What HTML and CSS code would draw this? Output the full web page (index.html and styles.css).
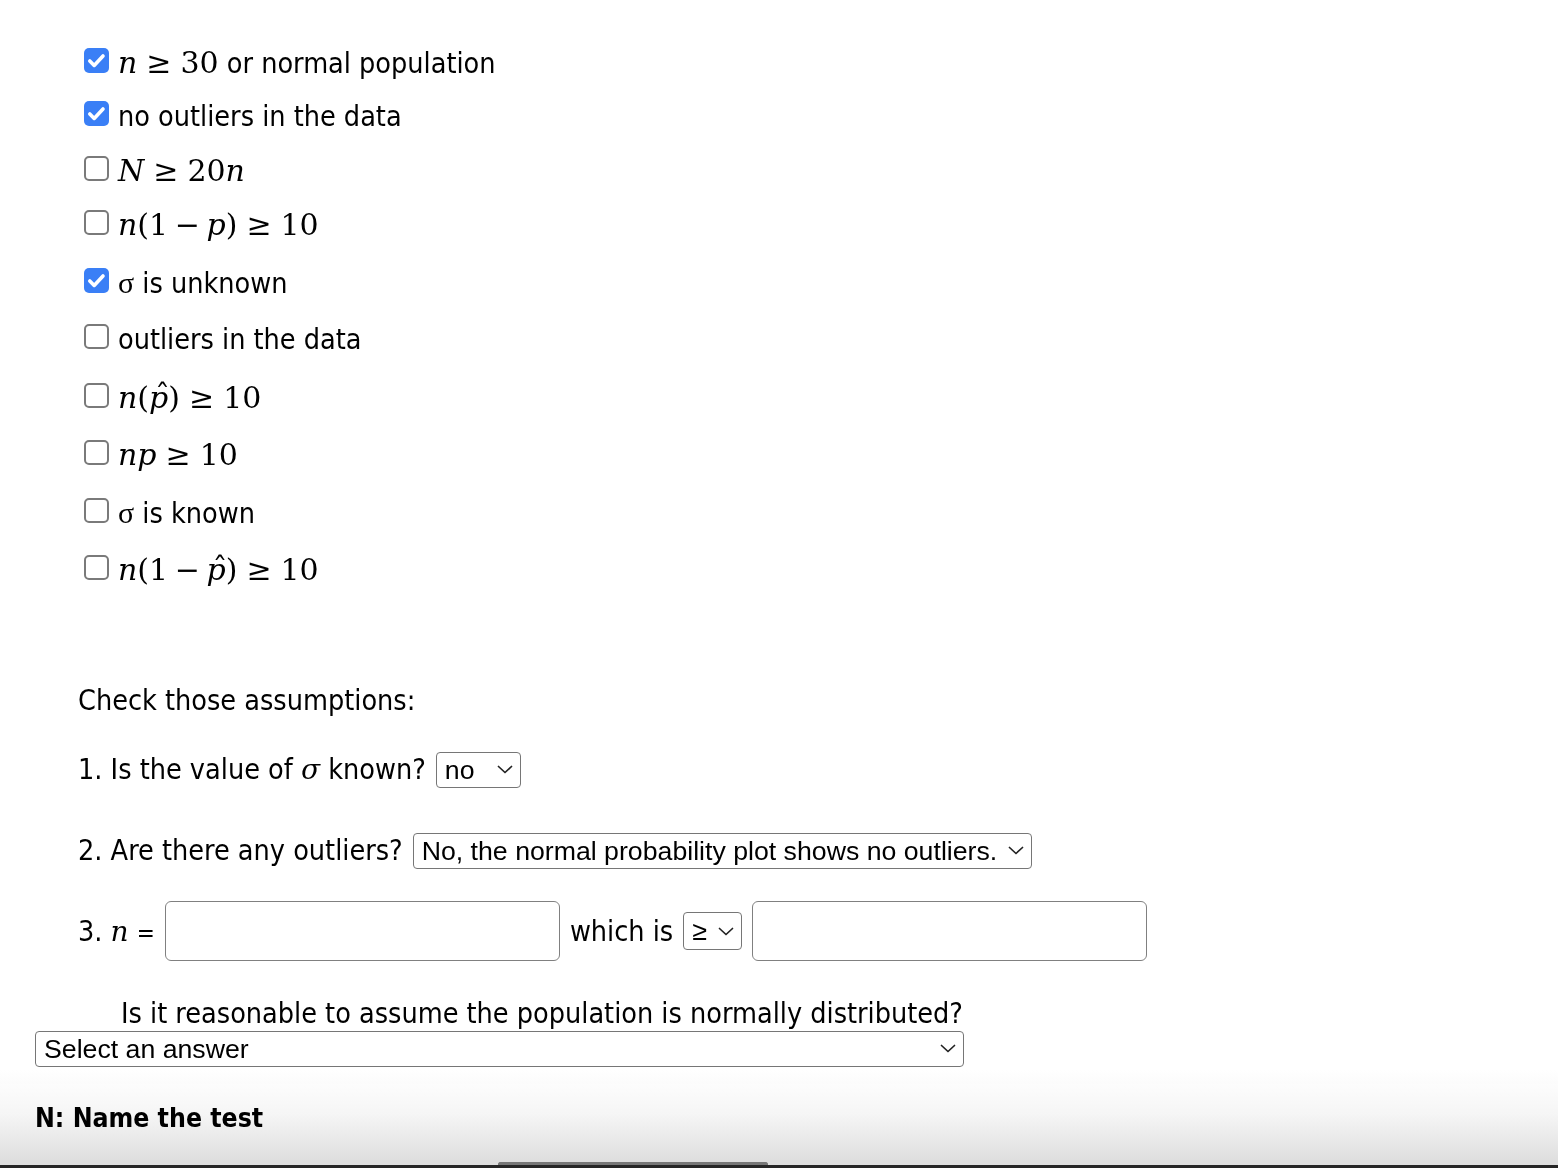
FILE: index.html
```html
<!DOCTYPE html>
<html lang="en">
<head>
<meta charset="utf-8">
<title>Check assumptions</title>
<link rel="stylesheet" href="styles.css">
</head>
<body>
<main class="page">
  <div class="opts">
    <div class="opt short"><span class="cb on"><svg viewBox="0 0 25 25"><path d="M5.8 13l4.4 4.4 8.8-9.4"/></svg></span><span class="lbl"><span class="m"><i>n</i><span class="rel">≥</span>30</span> or normal population</span></div>
    <div class="opt short"><span class="cb on"><svg viewBox="0 0 25 25"><path d="M5.8 13l4.4 4.4 8.8-9.4"/></svg></span><span class="lbl">no outliers in the data</span></div>
    <div class="opt short"><span class="cb"></span><span class="lbl"><span class="m"><i>N</i><span class="rel">≥</span>20<i>n</i></span></span></div>
    <div class="opt"><span class="cb"></span><span class="lbl"><span class="m"><i>n</i>(1<span class="bin">−</span><i>p</i>)<span class="rel">≥</span>10</span></span></div>
    <div class="opt"><span class="cb on"><svg viewBox="0 0 25 25"><path d="M5.8 13l4.4 4.4 8.8-9.4"/></svg></span><span class="lbl"><span class="sig">σ</span> is unknown</span></div>
    <div class="opt"><span class="cb"></span><span class="lbl">outliers in the data</span></div>
    <div class="opt"><span class="cb"></span><span class="lbl"><span class="m"><i>n</i>(<i class="hat">p</i>)<span class="rel">≥</span>10</span></span></div>
    <div class="opt"><span class="cb"></span><span class="lbl"><span class="m"><i>np</i><span class="rel">≥</span>10</span></span></div>
    <div class="opt"><span class="cb"></span><span class="lbl"><span class="sig">σ</span> is known</span></div>
    <div class="opt"><span class="cb"></span><span class="lbl"><span class="m"><i>n</i>(1<span class="bin">−</span><i class="hat">p</i>)<span class="rel">≥</span>10</span></span></div>
  </div>

  <section class="checks">
    <p class="head">Check those assumptions:</p>
    <div class="q q1">
      <span>1. Is the value of <span class="m"><i>σ</i></span> known?</span>
      <label class="sel w-q1"><select><option>no</option></select><svg class="chev" viewBox="0 0 16 9"><path d="M1.5 1.5l6.5 6 6.5-6"/></svg></label>
    </div>
    <div class="q q2">
      <span>2. Are there any outliers?</span>
      <label class="sel w-q2"><select><option>No, the normal probability plot shows no outliers.</option></select><svg class="chev" viewBox="0 0 16 9"><path d="M1.5 1.5l6.5 6 6.5-6"/></svg></label>
    </div>
    <div class="q q3">
      <span>3. <span class="m"><i>n</i></span> <span class="eq">=</span></span>
      <input class="box" type="text">
      <span>which is</span>
      <label class="sel w-rel"><select><option>≥</option></select><svg class="chev" viewBox="0 0 16 9"><path d="M1.5 1.5l6.5 6 6.5-6"/></svg></label>
      <input class="box" type="text">
    </div>
  </section>

  <section class="normal">
    <p class="prompt">Is it reasonable to assume the population is normally distributed?</p>
    <label class="sel w-big"><select><option>Select an answer</option></select><svg class="chev" viewBox="0 0 16 9"><path d="M1.5 1.5l6.5 6 6.5-6"/></svg></label>
    <h3 class="name">N: Name the test</h3>
  </section>
</main>
<div class="footbar"><span class="tab"></span></div>
</body>
</html>
```
FILE: styles.css
```css
html {
  background: #fff;
}
body {
  margin: 0;
  color: #000;
  font-family: "DejaVu Sans Condensed", "DejaVu Sans", sans-serif;
  font-size: 28.5px;
}
.page {
  padding-top: 36px;
}

/* checkbox list */
.opts {
  padding-left: 84px;
}
.opt {
  height: 57.5px;
  line-height: 54px;
  white-space: nowrap;
}
.opt.short {
  height: 54px;
}
.cb {
  display: inline-block;
  box-sizing: border-box;
  width: 25px;
  height: 25px;
  margin-right: 9px;
  border: 2px solid #7a7a7a;
  border-radius: 5px;
  background: #fff;
  vertical-align: baseline;
}
.cb.on {
  border: none;
  background: #3a7ff6;
}
.cb svg {
  display: block;
  width: 25px;
  height: 25px;
}
.cb svg path {
  fill: none;
  stroke: #fff;
  stroke-width: 3.6;
  stroke-linecap: round;
  stroke-linejoin: round;
}

/* math */
.m {
  font-family: "DejaVu Serif", "Liberation Serif", serif;
  font-size: 30px;
}
.m i {
  font-style: italic;
}
.rel {
  margin: 0 0.3em;
}
.bin {
  margin: 0 0.22em;
}
.hat {
  position: relative;
  display: inline-block;
}
.hat::after {
  content: "ˆ";
  position: absolute;
  left: 0.2em;
  top: -0.08em;
  font-style: normal;
}
.sig {
  font-family: "Liberation Serif", "DejaVu Serif", serif;
  font-size: 30px;
}

/* checks section */
.checks {
  padding-left: 78px;
}
.head {
  margin: 80px 0 0;
  line-height: 40px;
}
.q {
  display: flex;
  align-items: center;
  gap: 10px;
  white-space: nowrap;
}
.q1 {
  margin-top: 31px;
  height: 36px;
}
.q2 {
  margin-top: 45px;
  height: 36px;
}
.q3 {
  margin-top: 33px;
  height: 59px;
}
.q .m {
  font-size: 28px;
}
.eq {
  font-size: 24px;
}

.sel {
  box-sizing: border-box;
  display: inline-flex;
  align-items: center;
  height: 36px;
  padding: 0 7px 0 8px;
  border: 1.5px solid #767676;
  border-radius: 4px;
  background: #fff;
}
.sel select {
  flex: 1;
  min-width: 0;
  appearance: none;
  -webkit-appearance: none;
  border: none;
  background: transparent;
  padding: 0;
  margin: 0;
  font-family: "Liberation Sans", Arial, sans-serif;
  font-size: 26.7px;
  color: #000;
  outline: none;
}
.chev {
  flex: none;
  width: 16px;
  height: 9px;
}
.chev path {
  fill: none;
  stroke: #222;
  stroke-width: 1.7;
  stroke-linecap: round;
  stroke-linejoin: round;
}
.w-q1 {
  width: 85px;
}
.w-q2 {
  width: 619px;
}
.w-rel {
  width: 59px;
  height: 38px;
}
.w-big {
  width: 929px;
}
.box {
  box-sizing: border-box;
  width: 395px;
  height: 60px;
  margin: 0;
  padding: 0 10px;
  border: 1.5px solid #808080;
  border-radius: 6px;
  background: #fff;
  font-size: 24px;
}

/* normality question */
.normal {
  padding-left: 35px;
}
.prompt {
  margin: 36px 0 0 86px;
  line-height: 34px;
}
.name {
  margin: 31px 0 0;
  font-size: 26.4px;
  font-weight: bold;
  line-height: 40px;
}

/* bottom toolbar shading */
.footbar {
  position: fixed;
  left: 0;
  right: 0;
  bottom: 0;
  z-index: -1;
  height: 95px;
  background: linear-gradient(to bottom, rgba(255, 255, 255, 0) 0%, #f6f6f6 45%, #dedede 96%);
  border-bottom: 3px solid #262626;
}
.tab {
  position: absolute;
  left: 498px;
  bottom: 0;
  width: 270px;
  height: 3px;
  box-sizing: border-box;
  border: 3px solid #777;
  border-bottom: none;
  border-radius: 4px 4px 0 0;
}
```
